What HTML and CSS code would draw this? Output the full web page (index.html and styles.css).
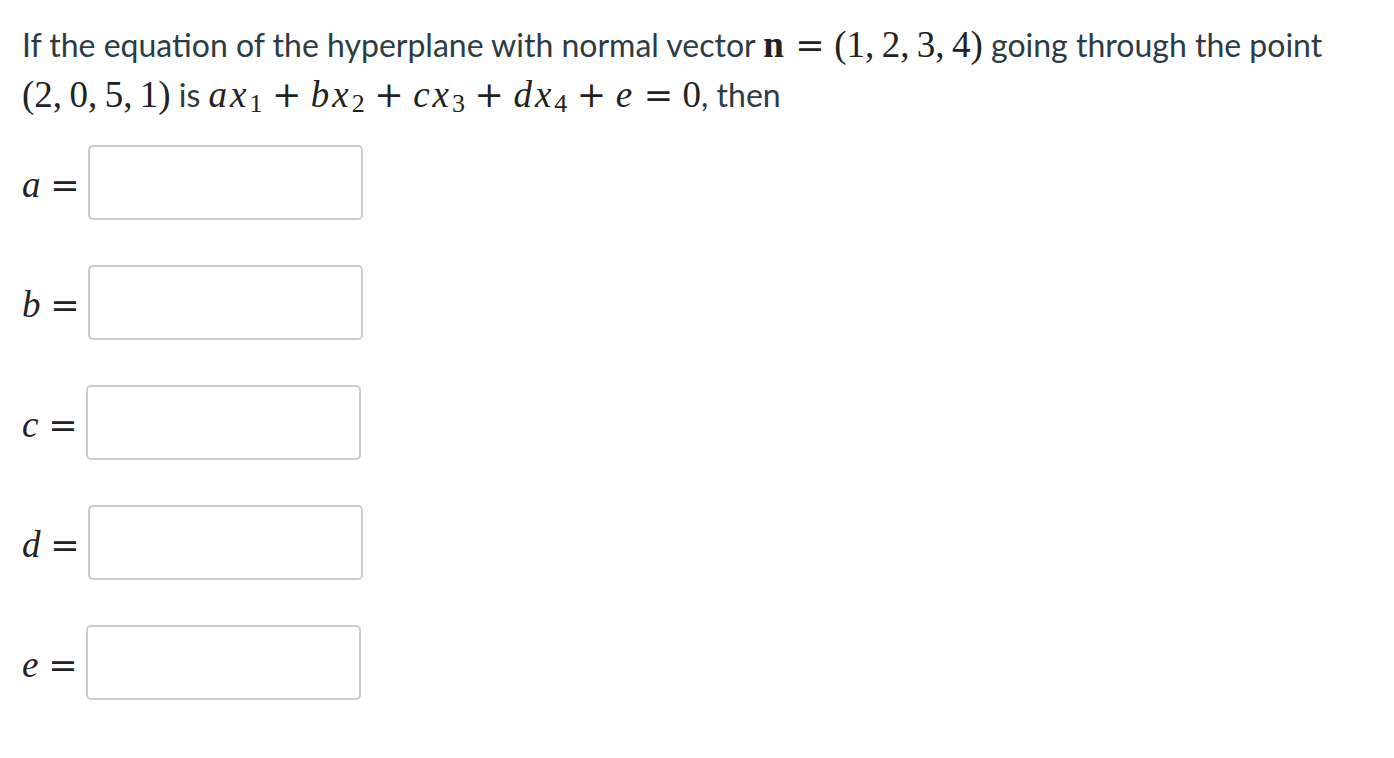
FILE: index.html
```html
<!DOCTYPE html>
<html>
<head>
<meta charset="utf-8">
<link rel="stylesheet" href="styles.css">
</head>
<body>
<div class="page">
  <p class="question">If the equation of the hyperplane with normal vector <span class="math"><b class="mb">n</b><span class="mo">=</span><span class="mn">(1,&#8201;2,&#8201;3,&#8201;4)</span></span> going through the point <span class="math"><span class="mn">(2,&#8201;0,&#8201;5,&#8201;1)</span></span> is <span class="math"><i>a</i><i class="x">x</i><sub>1</sub><span class="mo">+</span><i>b</i><i class="x">x</i><sub>2</sub><span class="mo">+</span><i>c</i><i class="x">x</i><sub>3</sub><span class="mo">+</span><i>d</i><i class="x">x</i><sub>4</sub><span class="mo">+</span><i>e</i><span class="mo">=</span><span class="mn">0</span></span>, then</p>
  <div class="rows">
    <div class="row"><span class="label"><i>a</i><span class="mo">=</span></span><input class="box" type="text"></div>
    <div class="row"><span class="label"><i>b</i><span class="mo">=</span></span><input class="box" type="text"></div>
    <div class="row"><span class="label"><i>c</i><span class="mo">=</span></span><input class="box" type="text"></div>
    <div class="row"><span class="label"><i>d</i><span class="mo">=</span></span><input class="box" type="text"></div>
    <div class="row"><span class="label"><i>e</i><span class="mo">=</span></span><input class="box" type="text"></div>
  </div>
</div>
</body>
</html>
```

FILE: styles.css
```css
html, body {
  margin: 0;
  padding: 0;
  background: #fff;
}
.page {
  padding: 20px 0 0 22px;
  font-family: Lato, "Open Sans", sans-serif;
  color: #2d3b45;
}
.question {
  margin: 0;
  font-size: 32px;
  line-height: 50px;
  width: 1360px;
}
.math {
  font-family: "Liberation Serif", "DejaVu Serif", serif;
  font-size: 37px;
  color: #222;
  white-space: nowrap;
}
.math i, .label i {
  font-style: italic;
  padding-right: 2px;
}
.math .x {
  padding: 0 3px 0 1px;
}
.math sub {
  font-size: 0.7em;
  font-style: normal;
  vertical-align: -0.2em;
  line-height: 0;
}
.mo {
  font-family: "DejaVu Serif", serif;
  font-size: 0.95em;
  padding: 0 0.27em;
}
.mb {
  font-weight: bold;
  padding-right: 2px;
}
.rows {
  display: flex;
  flex-direction: column;
  gap: 45px;
  margin-top: 25px;
}
.row {
  display: flex;
  align-items: center;
  gap: 8px;
}
.label {
  font-family: "Liberation Serif", "DejaVu Serif", serif;
  font-size: 37px;
  color: #222;
  padding-top: 3px;
}
.label .mo {
  padding: 0 0 0 0.22em;
}
.box {
  box-sizing: border-box;
  width: 275px;
  height: 75px;
  border: 2px solid #ccc;
  border-radius: 5px;
  margin: 0;
  padding: 0;
  background: #fff;
}
```
